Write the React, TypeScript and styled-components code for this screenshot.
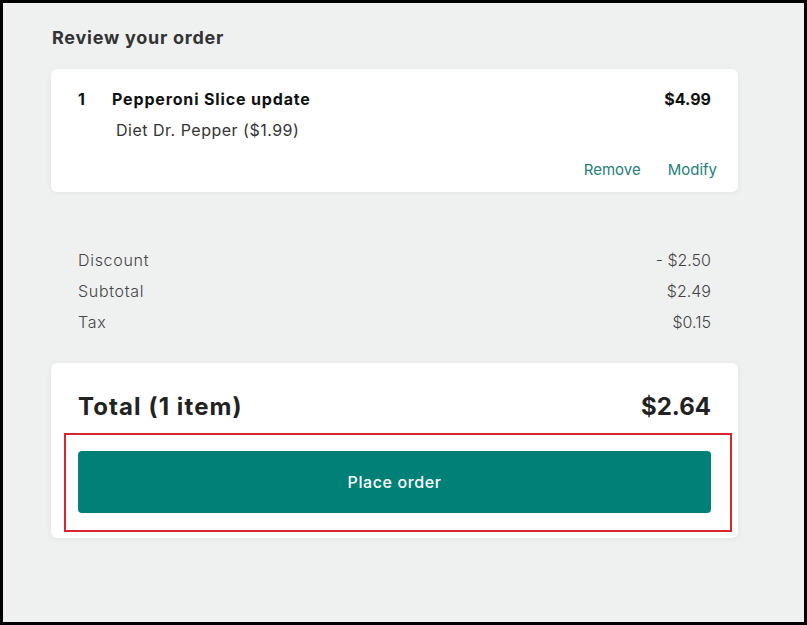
import React from "react";
import styled, { createGlobalStyle } from "styled-components";

const Global = createGlobalStyle`
  html, body { margin: 0; padding: 0; }
  body { font-family: Inter, "Noto Sans", sans-serif; }
`;

const Frame = styled.div`
  box-sizing: border-box;
  width: 807px;
  height: 625px;
  border: 3px solid #000;
  background: #eff1f0;
  padding: 23px 0 0 48px;
`;

const Column = styled.div`
  width: 687px;
  display: flex;
  flex-direction: column;
`;

const Heading = styled.h2`
  margin: 0 0 19px 1px;
  font-size: 18px;
  line-height: 24px;
  font-weight: 700;
  letter-spacing: 0.75px;
  color: #333;
`;

const Card = styled.div<{ $pad: string }>`
  background: #fff;
  border-radius: 6px;
  box-shadow: 0 1px 6px rgba(0, 0, 0, 0.06);
  padding: ${(p) => p.$pad};
  display: flex;
  flex-direction: column;
`;

const ItemRow = styled.div`
  display: flex;
  align-items: center;
  font-size: 16px;
  line-height: 22px;
  font-weight: 700;
  color: #111;
`;

const Qty = styled.span`
  width: 34px;
`;

const Name = styled.span`
  flex: 1;
  letter-spacing: 0.85px;
`;

const Extra = styled.div`
  margin: 9px 0 0 38px;
  font-size: 16px;
  line-height: 22px;
  letter-spacing: 0.5px;
  color: #333;
`;

const Actions = styled.div`
  display: flex;
  justify-content: flex-end;
  gap: 27px;
  margin: 19px -6px 0 0;
`;

const LinkButton = styled.button`
  background: none;
  border: none;
  padding: 0;
  font-family: inherit;
  font-size: 15px;
  line-height: 20px;
  color: #247f79;
  cursor: pointer;
`;

const Summary = styled.div`
  margin: 53px 27px 25px 27px;
  display: flex;
  flex-direction: column;
`;

const SummaryRow = styled.div`
  display: flex;
  justify-content: space-between;
  font-size: 16px;
  line-height: 31px;
  font-weight: 300;
  color: #444;
`;

const SummaryLabel = styled.span`
  letter-spacing: 0.7px;
`;

const TotalRow = styled.div`
  display: flex;
  justify-content: space-between;
  font-size: 24px;
  line-height: 30px;
  font-weight: 700;
  color: #222;
`;

const TotalLabel = styled.span`
  letter-spacing: 1.1px;
`;

const ButtonArea = styled.div`
  position: relative;
  margin-top: 29px;
  &::after {
    content: "";
    position: absolute;
    top: -18px;
    left: -14px;
    right: -21px;
    bottom: -19px;
    border: 2px solid #d9262e;
    pointer-events: none;
  }
`;

const PlaceButton = styled.button`
  width: 100%;
  height: 62px;
  border: none;
  border-radius: 4px;
  background: #008077;
  color: #fff;
  font-family: inherit;
  font-size: 16px;
  font-weight: 500;
  letter-spacing: 0.6px;
  cursor: pointer;
`;

const rows = [
  ["Discount", "- $2.50"],
  ["Subtotal", "$2.49"],
  ["Tax", "$0.15"],
];

export default function App() {
  return (
    <>
      <Global />
      <Frame>
        <Column>
          <Heading>Review your order</Heading>
          <Card $pad="19px 27px 12px 27px">
            <ItemRow>
              <Qty>1</Qty>
              <Name>Pepperoni Slice update</Name>
              <span>$4.99</span>
            </ItemRow>
            <Extra>Diet Dr. Pepper ($1.99)</Extra>
            <Actions>
              <LinkButton>Remove</LinkButton>
              <LinkButton>Modify</LinkButton>
            </Actions>
          </Card>
          <Summary>
            {rows.map(([k, v]) => (
              <SummaryRow key={k}>
                <SummaryLabel>{k}</SummaryLabel>
                <span>{v}</span>
              </SummaryRow>
            ))}
          </Summary>
          <Card $pad="29px 27px 25px 27px">
            <TotalRow>
              <TotalLabel>Total (1 item)</TotalLabel>
              <span>$2.64</span>
            </TotalRow>
            <ButtonArea>
              <PlaceButton>Place order</PlaceButton>
            </ButtonArea>
          </Card>
        </Column>
      </Frame>
    </>
  );
}
